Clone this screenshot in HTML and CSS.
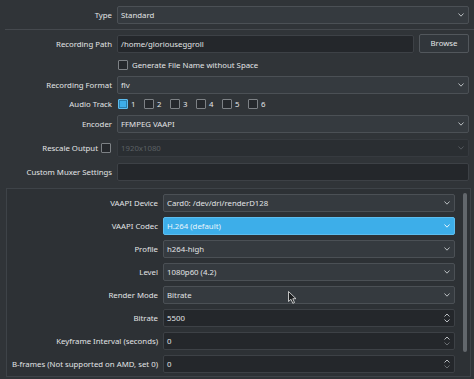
FILE: index.html
```html
<!DOCTYPE html>
<html lang="en">
<head>
    <meta charset="UTF-8">
    <meta name="viewport" content="width=device-width, initial-scale=1.0">
    <title>Recording Settings</title>
    <link rel="stylesheet" href="styles.css">
</head>
<body>
    <div class="top">
        <div class="row">
            <span class="lbl">Type</span>
            <div class="combo"><span>Standard</span><svg class="chev" viewBox="0 0 6 4"><path d="M0.5 0.5L3 3.2L5.5 0.5"/></svg></div>
        </div>

        <div class="sep"></div>

        <div class="row">
            <span class="lbl">Recording Path</span>
            <div class="path">
                <div class="edit">/home/gloriouseggroll</div>
                <div class="btn">Browse</div>
            </div>
        </div>

        <div class="row row-check">
            <span></span>
            <div class="check"><span class="box"></span>Generate File Name without Space</div>
        </div>

        <div class="row">
            <span class="lbl">Recording Format</span>
            <div class="combo"><span>flv</span><svg class="chev" viewBox="0 0 6 4"><path d="M0.5 0.5L3 3.2L5.5 0.5"/></svg></div>
        </div>

        <div class="row row-audio">
            <span class="lbl">Audio Track</span>
            <div class="tracks">
                <div class="check track"><span class="box on"></span>1</div>
                <div class="check track"><span class="box"></span>2</div>
                <div class="check track"><span class="box"></span>3</div>
                <div class="check track"><span class="box"></span>4</div>
                <div class="check track"><span class="box"></span>5</div>
                <div class="check track"><span class="box"></span>6</div>
            </div>
        </div>

        <div class="row">
            <span class="lbl">Encoder</span>
            <div class="combo"><span>FFMPEG VAAPI</span><svg class="chev" viewBox="0 0 6 4"><path d="M0.5 0.5L3 3.2L5.5 0.5"/></svg></div>
        </div>

        <div class="row row-rescale">
            <span class="lbl lbl-check">Rescale Output <span class="box"></span></span>
            <div class="combo off"><span>1920x1080</span><svg class="chev" viewBox="0 0 6 4"><path d="M0.5 0.5L3 3.2L5.5 0.5"/></svg></div>
        </div>

        <div class="row">
            <span class="lbl">Custom Muxer Settings</span>
            <div class="edit"></div>
        </div>
    </div>

    <div class="panel">
        <div class="panel-form">
            <div class="prow">
                <span class="lbl">VAAPI Device</span>
                <div class="combo"><span>Card0: /dev/dri/renderD128</span><svg class="chev" viewBox="0 0 6 4"><path d="M0.5 0.5L3 3.2L5.5 0.5"/></svg></div>
            </div>
            <div class="prow">
                <span class="lbl">VAAPI Codec</span>
                <div class="combo sel"><span>H.264 (default)</span><svg class="chev" viewBox="0 0 6 4"><path d="M0.5 0.5L3 3.2L5.5 0.5"/></svg></div>
            </div>
            <div class="prow">
                <span class="lbl">Profile</span>
                <div class="combo"><span>h264-high</span><svg class="chev" viewBox="0 0 6 4"><path d="M0.5 0.5L3 3.2L5.5 0.5"/></svg></div>
            </div>
            <div class="prow">
                <span class="lbl">Level</span>
                <div class="combo"><span>1080p60 (4.2)</span><svg class="chev" viewBox="0 0 6 4"><path d="M0.5 0.5L3 3.2L5.5 0.5"/></svg></div>
            </div>
            <div class="prow">
                <span class="lbl">Render Mode</span>
                <div class="combo"><span>Bitrate</span><svg class="chev" viewBox="0 0 6 4"><path d="M0.5 0.5L3 3.2L5.5 0.5"/></svg></div>
            </div>
            <div class="prow">
                <span class="lbl">Bitrate</span>
                <div class="edit spin"><span>5500</span><svg class="arrows" viewBox="0 0 6 10"><path d="M0.5 3.5L3 1L5.5 3.5"/><path d="M0.5 6.5L3 9L5.5 6.5"/></svg></div>
            </div>
            <div class="prow">
                <span class="lbl">Keyframe Interval (seconds)</span>
                <div class="edit spin"><span>0</span><svg class="arrows" viewBox="0 0 6 10"><path d="M0.5 3.5L3 1L5.5 3.5"/><path class="dim" d="M0.5 6.5L3 9L5.5 6.5"/></svg></div>
            </div>
            <div class="prow">
                <span class="lbl">B-frames (Not supported on AMD, set 0)</span>
                <div class="edit spin"><span>0</span><svg class="arrows" viewBox="0 0 6 10"><path d="M0.5 3.5L3 1L5.5 3.5"/><path class="dim" d="M0.5 6.5L3 9L5.5 6.5"/></svg></div>
            </div>
        </div>
        <div class="scroll"><div class="handle"></div></div>
    </div>

    <!-- mouse pointer sitting over the Render Mode combo -->
    <svg class="cursor" viewBox="0 0 9 13"><path d="M0.5 0.5L0.5 10.5L3 8.3L4.8 12.3L6.5 11.5L4.8 7.7L8 7.7Z"/></svg>
</body>
</html>
```

FILE: styles.css
```css
body {
    margin: 0;
    background: #303438;
    color: #e2e4e6;
    font-family: "Noto Sans", "DejaVu Sans", sans-serif;
    font-size: 7.8px;
    position: relative;
    overflow: hidden;
}
.top {
    padding: 3px 5px 0 0;
}
.row {
    display: grid;
    grid-template-columns: 112px 1fr;
    column-gap: 5px;
    align-items: center;
    height: 23px;
}
.row-check {
    height: 18px;
}
.row-audio {
    height: 16px;
}
.row-rescale {
    height: 25px;
}
.lbl {
    text-align: right;
    white-space: nowrap;
}
.lbl-check {
    display: flex;
    justify-content: flex-end;
    align-items: center;
    gap: 3px;
    padding-right: 1px;
}
.sep {
    height: 1px;
    margin: 3px -5px 2px 5px;
    background: #45494e;
}
.combo,
.edit,
.btn {
    box-sizing: border-box;
    height: 18px;
    border-radius: 2px;
    display: flex;
    align-items: center;
    white-space: nowrap;
}
.combo {
    background: #353a3f;
    border: 1px solid #4b5055;
    padding: 0 4px 0 3px;
    justify-content: space-between;
}
.edit {
    background: #24272b;
    border: 1px solid #3d4146;
    padding: 0 4px 0 3px;
}
.chev {
    width: 6px;
    height: 4px;
    fill: none;
    stroke: #b9bdc1;
    stroke-width: 1;
}
.combo.off {
    background: #2a2e32;
    border-color: #363a3f;
    color: #5c6165;
}
.combo.off .chev {
    stroke: #55595e;
}
.combo.sel {
    background: #3daee9;
    border-color: #5cbdef;
    color: #eaf6fc;
}
.combo.sel .chev {
    stroke: #e8f5fc;
}
.path {
    display: flex;
    gap: 5px;
}
.path .edit {
    flex: 1;
}
.btn {
    width: 50px;
    height: 19px;
    margin-top: -1px;
    justify-content: center;
    background: #31363b;
    border: 1px solid #52575c;
}
.check {
    display: flex;
    align-items: center;
    gap: 4px;
    padding-left: 1px;
}
.box {
    box-sizing: border-box;
    width: 10px;
    height: 10px;
    border: 1px solid #7d8185;
    border-radius: 1px;
    background: #25282c;
    flex: none;
}
.box.on {
    border-color: #5dbcee;
    background: #3daee9;
    box-shadow: inset 0 0 0 1px #2a7fad;
}
.row-check .check {
    padding-top: 2px;
}
.tracks {
    display: flex;
}
.track {
    width: 25px;
    gap: 3px;
}
.panel {
    display: flex;
    width: 465px;
    box-sizing: border-box;
    margin: 5px 0 0 6px;
    padding: 2px 0 1px;
    border: 1px solid #3e4348;
    background: #2d3135;
}
.panel-form {
    width: 448px;
}
.prow {
    display: grid;
    grid-template-columns: 151px 1fr;
    column-gap: 5px;
    align-items: center;
    height: 23px;
}
.spin {
    justify-content: space-between;
}
.arrows {
    width: 6px;
    height: 10px;
    fill: none;
    stroke: #b9bdc1;
    stroke-width: 1;
}
.arrows .dim {
    stroke: #6a6e72;
}
.scroll {
    width: 14px;
    box-sizing: border-box;
    padding-left: 8px;
}
.handle {
    width: 4px;
    height: 159px;
    margin-top: 2px;
    border-radius: 2px;
    background: #62676c;
}
.cursor {
    position: absolute;
    left: 288px;
    top: 291px;
    width: 9px;
    height: 13px;
    fill: #1d1f21;
    stroke: #e8e8e8;
    stroke-width: 0.8;
}
```
